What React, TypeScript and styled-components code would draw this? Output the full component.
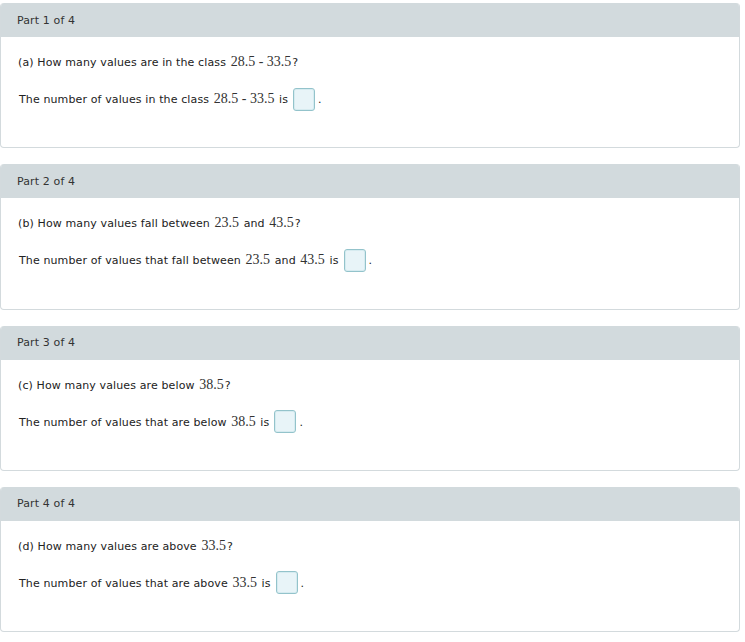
import React from 'react';
import styled, { createGlobalStyle } from 'styled-components';

const GlobalStyle = createGlobalStyle`
  html, body {
    margin: 0;
    padding: 0;
    background: #ffffff;
  }
  body {
    font-family: "DejaVu Sans", Verdana, sans-serif;
    font-size: 11px;
    letter-spacing: 0.12px;
    color: #222222;
  }
`;

const Page = styled.div`
  display: flex;
  flex-direction: column;
  gap: 16px;
  width: 740px;
  padding-top: 3px;
`;

const Card = styled.section`
  border: 1px solid #d3dadd;
  border-top: none;
  border-radius: 4px;
  background: #ffffff;
  overflow: hidden;
`;

const Header = styled.div`
  display: flex;
  align-items: center;
  height: 34px;
  padding-left: 16px;
  background: #d2dadd;
  color: #333333;
`;

const Body = styled.div`
  padding: 15px 16px 36.3px 17px;
`;

const Question = styled.p`
  margin: 0;
  line-height: 20px;
`;

const Answer = styled.p`
  margin: 14px 0 0 1px;
  line-height: 23px;
`;

const Num = styled.span`
  font-family: "Liberation Serif", "Times New Roman", serif;
  font-size: 14px;
  letter-spacing: 0;
  margin: 0 1px;
  color: #333333;
`;

const AnswerBox = styled.span`
  display: inline-block;
  vertical-align: middle;
  box-sizing: border-box;
  width: 22px;
  height: 23px;
  margin: -2px 3px 0 5px;
  border: 1px solid #93c3cb;
  border-radius: 3px;
  background: #e8f4f8;
  box-shadow: inset 0 0 0 1px #d6ebf0;
`;

type Part = {
  label: string;
  question: React.ReactNode;
  answer: React.ReactNode;
};

const parts: Part[] = [
  {
    label: 'Part 1 of 4',
    question: (
      <>
        (a) How many values are in the class <Num>28.5 - 33.5</Num>?
      </>
    ),
    answer: (
      <>
        The number of values in the class <Num>28.5 - 33.5</Num> is
      </>
    ),
  },
  {
    label: 'Part 2 of 4',
    question: (
      <>
        (b) How many values fall between <Num>23.5</Num> and <Num>43.5</Num>?
      </>
    ),
    answer: (
      <>
        The number of values that fall between <Num>23.5</Num> and <Num>43.5</Num> is
      </>
    ),
  },
  {
    label: 'Part 3 of 4',
    question: (
      <>
        (c) How many values are below <Num>38.5</Num>?
      </>
    ),
    answer: (
      <>
        The number of values that are below <Num>38.5</Num> is
      </>
    ),
  },
  {
    label: 'Part 4 of 4',
    question: (
      <>
        (d) How many values are above <Num>33.5</Num>?
      </>
    ),
    answer: (
      <>
        The number of values that are above <Num>33.5</Num> is
      </>
    ),
  },
];

export default function App() {
  return (
    <>
      <GlobalStyle />
      <Page>
        {parts.map((p) => (
          <Card key={p.label}>
            <Header>{p.label}</Header>
            <Body>
              <Question>{p.question}</Question>
              <Answer>
                {p.answer}
                <AnswerBox />.
              </Answer>
            </Body>
          </Card>
        ))}
        <Card>
          <Header />
        </Card>
      </Page>
    </>
  );
}
